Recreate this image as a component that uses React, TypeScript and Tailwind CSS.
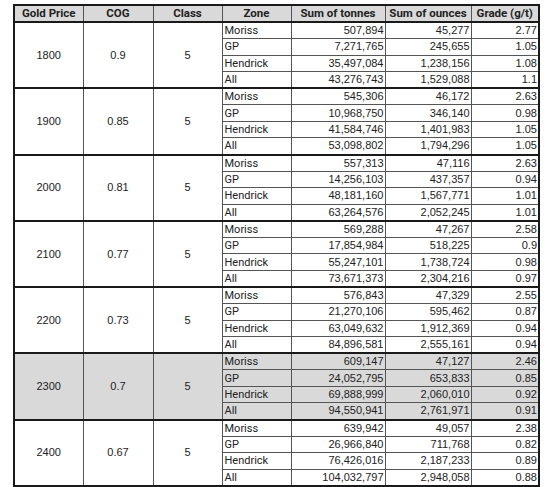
const groups = [
  {
    price: "1800", cog: "0.9", cls: "5",
    rows: [
      ["Moriss", "507,894", "45,277", "2.77"],
      ["GP", "7,271,765", "245,655", "1.05"],
      ["Hendrick", "35,497,084", "1,238,156", "1.08"],
      ["All", "43,276,743", "1,529,088", "1.1"],
    ],
  },
  {
    price: "1900", cog: "0.85", cls: "5",
    rows: [
      ["Moriss", "545,306", "46,172", "2.63"],
      ["GP", "10,968,750", "346,140", "0.98"],
      ["Hendrick", "41,584,746", "1,401,983", "1.05"],
      ["All", "53,098,802", "1,794,296", "1.05"],
    ],
  },
  {
    price: "2000", cog: "0.81", cls: "5",
    rows: [
      ["Moriss", "557,313", "47,116", "2.63"],
      ["GP", "14,256,103", "437,357", "0.94"],
      ["Hendrick", "48,181,160", "1,567,771", "1.01"],
      ["All", "63,264,576", "2,052,245", "1.01"],
    ],
  },
  {
    price: "2100", cog: "0.77", cls: "5",
    rows: [
      ["Moriss", "569,288", "47,267", "2.58"],
      ["GP", "17,854,984", "518,225", "0.9"],
      ["Hendrick", "55,247,101", "1,738,724", "0.98"],
      ["All", "73,671,373", "2,304,216", "0.97"],
    ],
  },
  {
    price: "2200", cog: "0.73", cls: "5",
    rows: [
      ["Moriss", "576,843", "47,329", "2.55"],
      ["GP", "21,270,106", "595,462", "0.87"],
      ["Hendrick", "63,049,632", "1,912,369", "0.94"],
      ["All", "84,896,581", "2,555,161", "0.94"],
    ],
  },
  {
    price: "2300", cog: "0.7", cls: "5", shaded: true,
    rows: [
      ["Moriss", "609,147", "47,127", "2.46"],
      ["GP", "24,052,795", "653,833", "0.85"],
      ["Hendrick", "69,888,999", "2,060,010", "0.92"],
      ["All", "94,550,941", "2,761,971", "0.91"],
    ],
  },
  {
    price: "2400", cog: "0.67", cls: "5",
    rows: [
      ["Moriss", "639,942", "49,057", "2.38"],
      ["GP", "26,966,840", "711,768", "0.82"],
      ["Hendrick", "76,426,016", "2,187,233", "0.89"],
      ["All", "104,032,797", "2,948,058", "0.88"],
    ],
  },
];

const headers = ["Gold Price", "COG", "Class", "Zone", "Sum of tonnes", "Sum of ounces", "Grade (g/t)"];

export default function App() {
  return (
    <div className="w-[549px] h-[487px] bg-white pt-[4px] pl-[13px]">
      <table className="border-collapse border-2 border-[#1a1a1a] w-[525px] table-fixed text-[11px] text-[#222]">
        <colgroup>
          <col className="w-[69px]" />
          <col className="w-[70px]" />
          <col className="w-[69px]" />
          <col className="w-[69px]" />
          <col className="w-[94px]" />
          <col className="w-[86px]" />
          <col className="w-[68px]" />
        </colgroup>
        <thead>
          <tr className="h-[17px] bg-[#d9d9d9]">
            {headers.map((h) => (
              <th
                key={h}
                className="border border-[#555] border-b-2 border-b-[#1a1a1a] font-bold text-center text-[11.5px] leading-none p-0 font-['Roboto',sans-serif]"
              >
                {h}
              </th>
            ))}
          </tr>
        </thead>
        <tbody>
          {groups.map((g) =>
            g.rows.map((r, i) => (
              <tr
                key={g.price + r[0]}
                className={`h-[16.57px] ${g.shaded ? "bg-[#d9d9d9]" : "bg-white"}`}
              >
                {i === 0 && (
                  <>
                    <td rowSpan={4} className="border border-[#555] border-t-2 border-t-[#1a1a1a] text-center p-0 font-['Liberation_Sans',sans-serif]">
                      {g.price}
                    </td>
                    <td rowSpan={4} className="border border-[#555] border-t-2 border-t-[#1a1a1a] text-center p-0 font-['Liberation_Sans',sans-serif]">
                      {g.cog}
                    </td>
                    <td rowSpan={4} className="border border-[#555] border-t-2 border-t-[#1a1a1a] text-center p-0 font-['Liberation_Sans',sans-serif]">
                      {g.cls}
                    </td>
                  </>
                )}
                <td
                  className={`border border-[#555] px-[2px] py-0 leading-none text-left font-['Roboto',sans-serif] ${
                    i === 0 ? "border-t-2 border-t-[#1a1a1a]" : ""
                  }`}
                >
                  {r[0]}
                </td>
                {r.slice(1).map((v, j) => (
                  <td
                    key={j}
                    className={`border border-[#555] px-[1px] py-0 leading-none text-right font-['Liberation_Sans',sans-serif] ${
                      i === 0 ? "border-t-2 border-t-[#1a1a1a]" : ""
                    }`}
                  >
                    {v}
                  </td>
                ))}
              </tr>
            ))
          )}
        </tbody>
      </table>
    </div>
  );
}
